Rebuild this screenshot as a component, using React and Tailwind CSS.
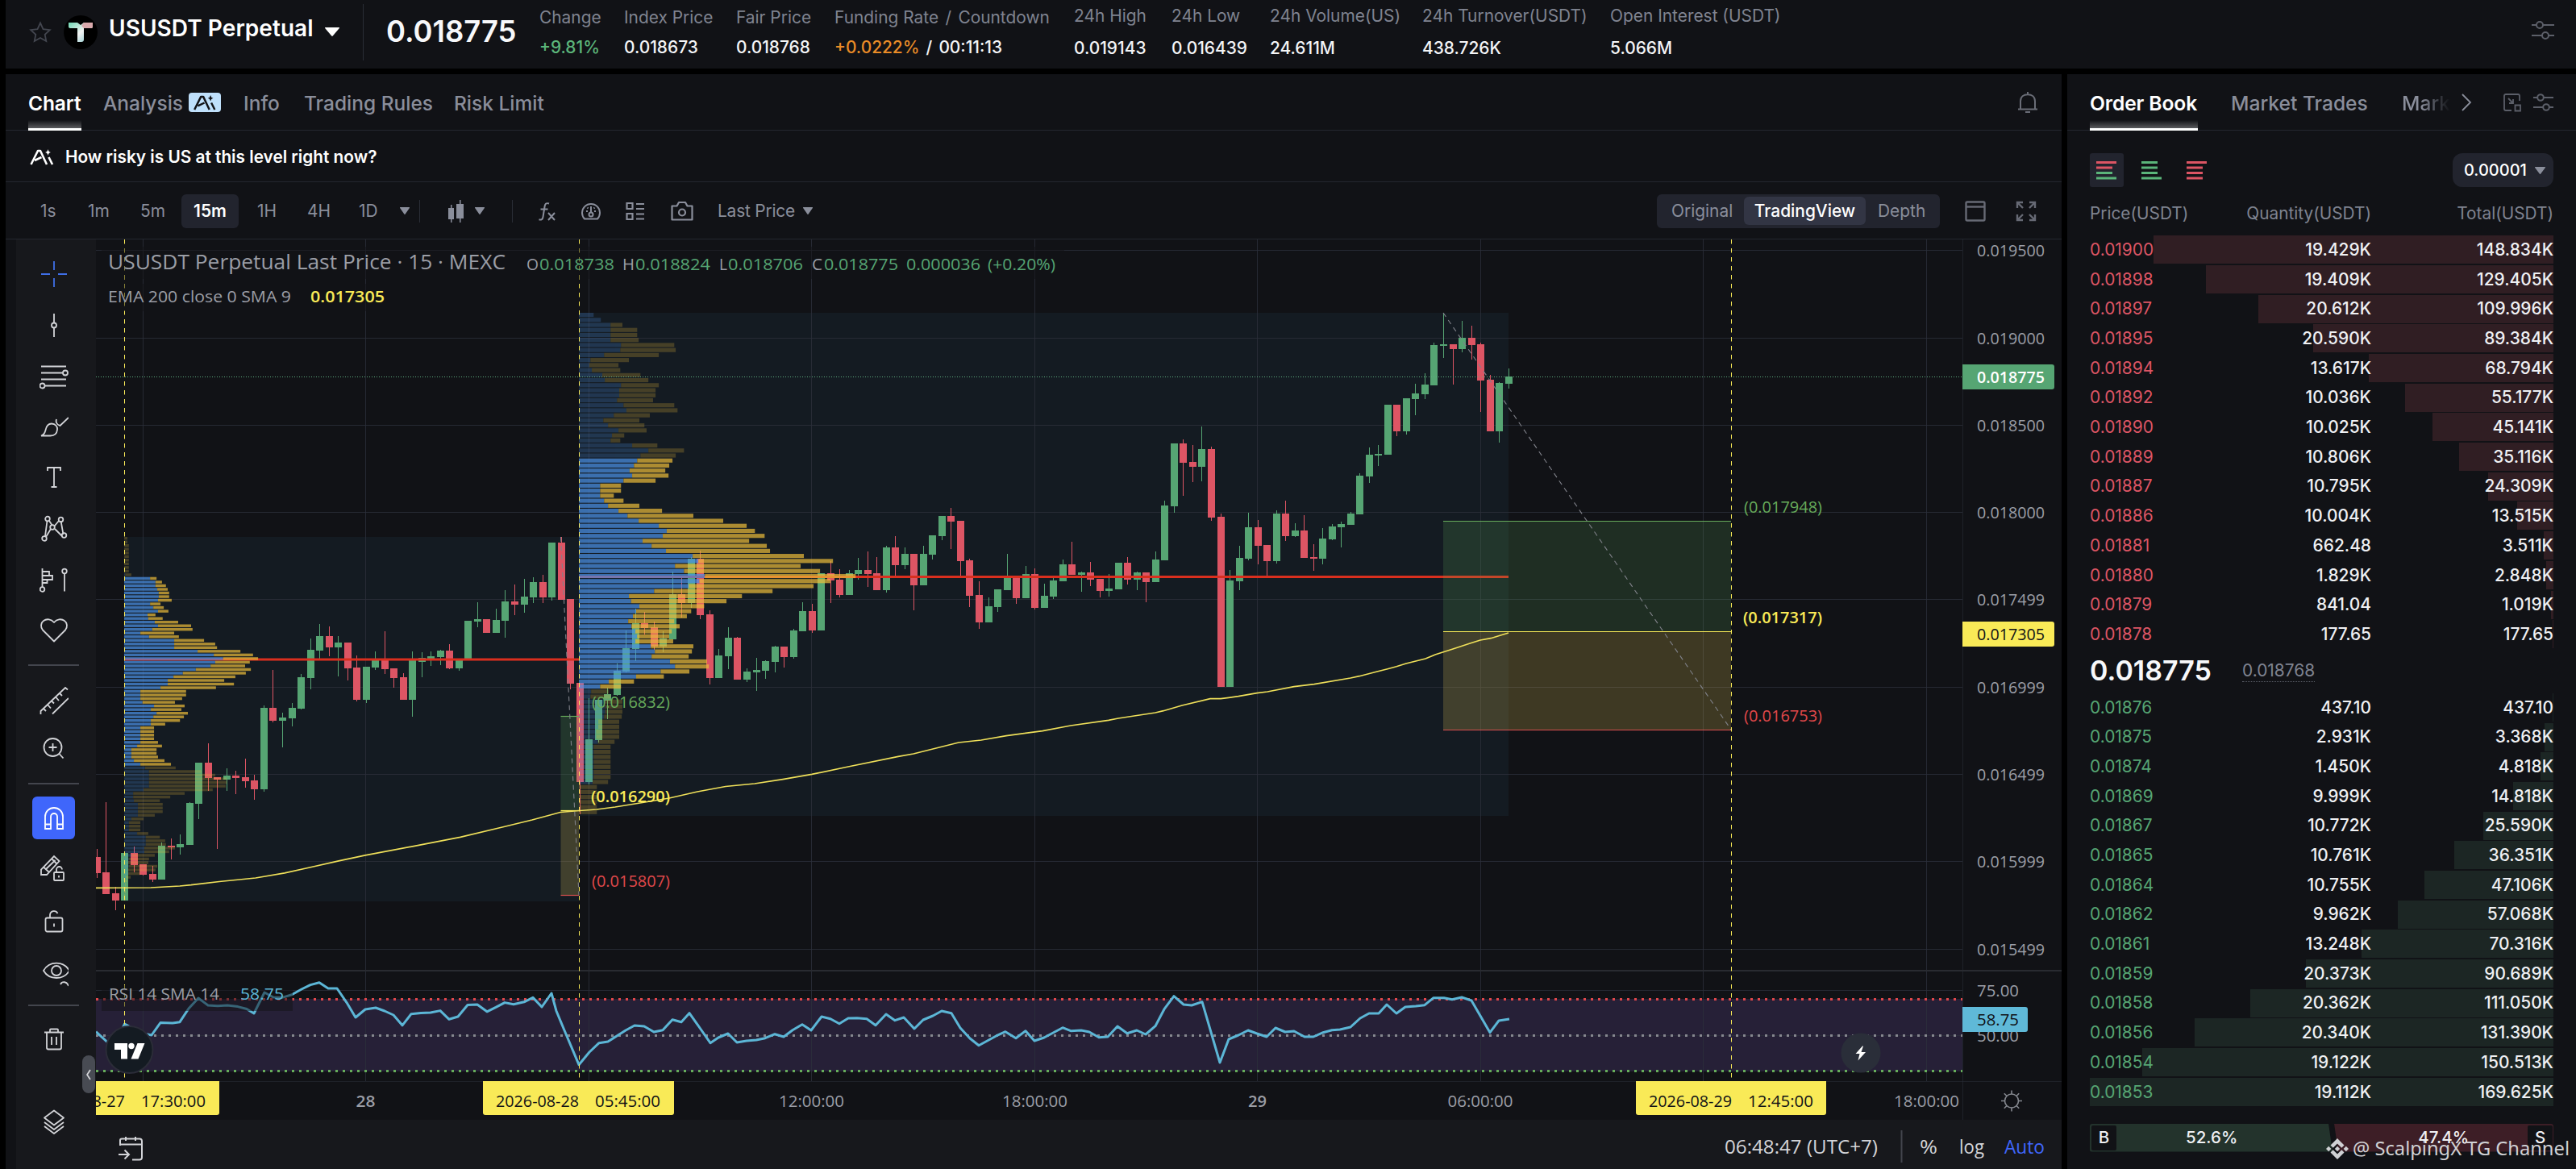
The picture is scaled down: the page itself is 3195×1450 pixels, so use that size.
import { clsx } from 'clsx';

/* ------------------------------------------------------------------ */
/* Data                                                               */
/* ------------------------------------------------------------------ */

const STATS = [
  { label: 'Change', value: '+9.81%', width: 'w-[105px]', color: 'text-[#5bb57a]' },
  { label: 'Index Price', value: '0.018673', width: 'w-[139px]' },
  { label: 'Fair Price', value: '0.018768', width: 'w-[122px]' },
];

const STATS_24H = [
  { label: '24h High', value: '0.019143', width: 'w-[121px]' },
  { label: '24h Low', value: '0.016439', width: 'w-[122px]' },
  { label: '24h Volume(US)', value: '24.611M', width: 'w-[189px]' },
  { label: '24h Turnover(USDT)', value: '438.726K', width: 'w-[233px]' },
  { label: 'Open Interest (USDT)', value: '5.066M', width: 'w-[240px]' },
];

const ASKS = [
  ['0.01900', '19.429K', '148.834K'],
  ['0.01898', '19.409K', '129.405K'],
  ['0.01897', '20.612K', '109.996K'],
  ['0.01895', '20.590K', '89.384K'],
  ['0.01894', '13.617K', '68.794K'],
  ['0.01892', '10.036K', '55.177K'],
  ['0.01890', '10.025K', '45.141K'],
  ['0.01889', '10.806K', '35.116K'],
  ['0.01887', '10.795K', '24.309K'],
  ['0.01886', '10.004K', '13.515K'],
  ['0.01881', '662.48', '3.511K'],
  ['0.01880', '1.829K', '2.848K'],
  ['0.01879', '841.04', '1.019K'],
  ['0.01878', '177.65', '177.65'],
];

const BIDS = [
  ['0.01876', '437.10', '437.10'],
  ['0.01875', '2.931K', '3.368K'],
  ['0.01874', '1.450K', '4.818K'],
  ['0.01869', '9.999K', '14.818K'],
  ['0.01867', '10.772K', '25.590K'],
  ['0.01865', '10.761K', '36.351K'],
  ['0.01864', '10.755K', '47.106K'],
  ['0.01862', '9.962K', '57.068K'],
  ['0.01861', '13.248K', '70.316K'],
  ['0.01859', '20.373K', '90.689K'],
  ['0.01858', '20.362K', '111.050K'],
  ['0.01856', '20.340K', '131.390K'],
  ['0.01854', '19.122K', '150.513K'],
  ['0.01853', '19.112K', '169.625K'],
];

// direction, high, body top, body bottom, low
const CANDLES = `r1053,1063,1083,1089 r995,1082,1109,1109 r1100,1108,1117,1129 g1058,1058,1117,1117 r1050,1058,1073,1082
r1072,1072,1085,1086 r1074,1084,1091,1094 g1045,1049,1091,1091 r1040,1049,1051,1066 g1035,1047,1051,1060
g995,996,1048,1048 g946,946,997,1016 r922,946,965,981 r964,964,967,1053 g953,962,967,981
r956,962,965,985 r941,964,969,977 r961,968,979,992 g875,878,979,982 r831,878,894,896
g884,890,894,927 g872,878,891,901 g836,840,879,880 g792,806,841,855 g774,789,807,817
r777,789,803,814 g789,797,803,839 r797,797,829,844 r813,828,868,870 g827,827,868,872
g808,819,828,831 r783,819,830,836 r829,829,841,853 r835,840,868,868 g808,819,868,889
g809,816,821,840 g808,814,817,826 g806,807,815,825 r799,807,829,830 g819,819,829,832
g770,770,817,817 g747,768,771,778 r768,768,785,785 g755,769,785,785 g732,746,770,791
r725,746,750,763 g718,740,750,760 g716,722,741,748 r713,722,741,748 g673,673,741,745
r666,673,744,744 r743,743,848,855 r847,847,970,1010 g866,917,970,973 g868,868,918,921
g853,861,869,892 g823,832,862,863 g782,804,833,834 g755,773,805,820 r759,773,779,787
r771,778,802,806 g783,792,802,809 g709,737,793,793 r717,737,748,766 g691,693,748,754
r683,693,763,768 r757,762,841,849 g805,813,841,841 g778,791,814,830 r790,791,843,843
g829,833,843,846 g816,831,834,857 g819,820,832,842 g801,802,821,834 r802,802,815,828
g780,782,815,817 g747,758,783,783 r749,758,782,785 g711,711,782,782 r696,711,720,748
r706,719,738,741 g707,711,738,738 g692,707,712,719 r684,707,712,728 r691,711,732,732
g677,679,732,735 r665,679,701,714 g679,687,701,706 r687,687,726,757 g677,687,726,726
g664,664,688,694 g640,640,665,670 r630,640,647,681 r646,646,696,714 r693,695,739,753
r721,738,772,780 g741,752,772,772 g731,731,753,759 g687,715,732,732 r715,715,742,749
g702,712,742,742 r705,712,754,756 g724,739,754,754 g716,720,740,743 g694,700,721,721
r672,700,713,713 g709,710,713,734 r697,710,719,727 r718,718,733,741 g712,730,733,740
g698,698,731,731 r691,698,719,725 g709,710,719,732 r710,710,722,747 g684,694,722,722
g621,627,695,695 g550,550,628,636 r545,550,574,615 r552,573,579,598 g529,557,579,597
r554,557,642,646 r637,641,852,852 g707,720,852,852 g677,692,721,732 g636,654,693,695
r645,654,677,700 r676,676,696,715 g633,637,696,699 r621,637,665,671 g649,658,665,666
r639,658,692,692 r675,691,693,708 g655,668,693,700 g650,653,669,670 g647,650,654,679
g635,637,651,651 g587,590,638,638 g555,564,591,599 g552,563,565,578 g502,502,564,564
r502,502,535,541 g494,494,535,539 g476,488,495,515 g463,477,489,495 g425,428,478,478
g388,427,429,444 r427,427,433,477 g398,419,433,437 r404,419,428,446 r425,427,472,511
r465,471,535,535 g474,475,535,549 g457,467,476,482`
  .split(/\s+/)
  .map((c) => ({ up: c[0] === 'g', v: c.slice(1).split(',').map(Number) }));

// [buy volume, total volume] for each of the 100 rows of a session
const PROFILE_A = [
  [0, 9], [0, 9], [0, 13], [0, 13], [0, 13], [0, 13], [0, 13], [0, 13], [0, 13], [0, 13],
  [3, 20], [72, 90], [87, 105], [87, 116], [92, 121], [96, 125], [96, 125], [94, 132], [72, 101], [81, 110],
  [94, 123], [65, 87], [67, 107], [85, 150], [94, 186], [78, 190], [45, 139], [69, 152], [139, 222], [139, 253],
  [139, 258], [204, 323], [249, 358], [275, 372], [253, 349], [240, 336], [199, 352], [163, 338], [137, 309], [121, 278],
  [121, 305], [101, 255], [45, 172], [45, 172], [45, 161], [51, 141], [83, 168], [74, 159], [90, 177], [81, 166],
  [74, 155], [74, 114], [45, 83], [45, 83], [45, 83], [45, 83], [45, 94], [36, 105], [20, 90], [20, 90],
  [20, 94], [27, 112], [45, 130], [58, 143], [69, 215], [69, 253], [69, 285], [69, 285], [69, 282], [54, 246],
  [25, 168], [25, 128], [27, 99], [38, 107], [38, 107], [38, 107], [38, 85], [20, 54], [13, 45], [13, 45],
  [13, 45], [36, 67], [60, 99], [60, 114], [60, 116], [56, 141], [56, 125], [20, 85], [13, 69], [11, 67],
  [13, 92], [11, 87], [11, 45], [5, 18], [2, 9], [2, 5], [0, 5], [0, 5], [0, 3], [0, 3],
];

const PROFILE_B = [
  [41, 41], [61, 61], [88, 121], [88, 162], [88, 162], [88, 166], [117, 265], [115, 269], [70, 222], [32, 139],
  [29, 110], [36, 115], [65, 171], [72, 193], [117, 222], [112, 213], [112, 213], [106, 206], [124, 265], [132, 274],
  [97, 197], [68, 168], [81, 182], [110, 188], [92, 126], [88, 115], [148, 218], [193, 292], [171, 269], [162, 260],
  [153, 251], [141, 240], [148, 249], [124, 213], [59, 117], [59, 117], [59, 97], [70, 124], [81, 168], [110, 231],
  [135, 318], [166, 401], [222, 466], [244, 489], [233, 516], [177, 473], [202, 522], [242, 531], [316, 625], [332, 706],
  [267, 616], [292, 670], [350, 769], [335, 699], [305, 652], [209, 538], [139, 453], [145, 410], [168, 348], [159, 312],
  [150, 300], [137, 265], [146, 280], [157, 258], [162, 251], [157, 262], [200, 318], [211, 314], [202, 305], [253, 356],
  [267, 361], [227, 307], [159, 236], [83, 153], [59, 117], [34, 83], [32, 88], [74, 121], [73, 121], [73, 121],
  [70, 119], [54, 112], [54, 112], [48, 112], [48, 112], [53, 99], [41, 88], [41, 88], [41, 88], [41, 88],
  [41, 88], [41, 88], [41, 88], [38, 81], [0, 50], [0, 50], [0, 50], [0, 50], [0, 50], [0, 50],
];

const EMA =
  '119,1101.4 187,1101 223,1099 237,1097.7 272,1093.5 317,1089 353,1082.8 384,1076 420,1067.8 453,1060.8 513,1049.6 571,1038.4 625,1025.5 660,1017 695,1007.5 718,1005.5 740,1004 763,1001 800,995 830,990 865,982 900,975.5 936,972 971,966.6 1007,960.4 1052,951 1114,938.4 1133,935 1189,921 1217,918 1248,912.7 1293,906.6 1328,900 1375,893.3 1387,891 1433,884 1443,881.7 1466,875 1501,866.7 1514,866.7 1536,863.7 1559,859.7 1572,858 1605,851.7 1630,848.7 1675,841 1686,838.7 1708,833 1721,829.7 1732,826.7 1744,823 1768,817 1780,812 1802,805 1824,797.7 1836,794 1849,791.7 1871,785';

const RSI =
  '119,1279.7 133,1292.5 143,1296 154.5,1270 163,1274.7 178,1282 188,1284 199,1268.5 214,1269 223,1267.7 234,1251 246,1238 258,1247 270,1247.8 282,1247 295,1248.6 306,1251.5 315,1257 328,1231 339,1237 350,1237.4 362,1233.7 374,1227 385,1221.6 396,1218.7 407,1226 418,1226 430,1243.6 441,1262 453,1252 466,1250 477,1254 488,1259 499,1271.8 510,1257.7 522,1256.5 534,1256 546,1253.6 557,1264.3 568,1261 580,1246.5 592,1246 604,1254.8 615,1249.4 626,1243.6 637,1245.7 650,1242.8 661,1237.4 672,1249 684,1232 690,1254 700,1278 718,1320.7 731,1305 743,1293.7 754,1292 765,1285 776,1278 787,1272 799,1273 811,1280 822,1277.7 834,1264.7 845,1267.7 855,1256.7 868,1275 881,1293.7 891,1287 903,1282 914,1293 926,1291 938,1290 949,1287.7 961,1282.7 972,1286 983,1277.7 995,1270.7 1006,1278 1019,1261 1030,1263.7 1041,1269.7 1052,1263 1063,1262.7 1075,1263.7 1086,1271.7 1099,1258 1110,1265.7 1121,1262 1134,1276 1145,1265 1157,1260 1168,1254 1180,1256.7 1191,1275 1203,1288 1214,1296.7 1236,1284.7 1247,1279.7 1260,1287.7 1272,1278.7 1283,1291 1295,1287 1318,1274.7 1328,1278.7 1341,1278 1351,1280 1363,1286.7 1374,1286 1386,1273 1398,1281.7 1410,1278 1421,1283 1433,1272.7 1444,1251.7 1456,1235.7 1468,1246 1478,1247 1491,1242.7 1513,1318 1524,1289 1536,1284 1548,1278 1559,1282 1571,1286 1582,1275 1594,1280 1605,1279 1618,1286 1629,1286 1641,1280.7 1652,1277.7 1662,1277 1675,1274 1687,1263 1698,1257 1710,1257 1720,1246 1732,1257 1743,1249 1756,1248 1767,1246.7 1778,1237.7 1791,1237.7 1801,1239.7 1813,1237 1825,1241 1848,1280.7 1859,1266 1872,1264';

const GRID_X = [177, 453.5, 730, 1006.5, 1283.5, 1559.5, 1836.5, 2112.5, 2389.5];

const PRICE_AXIS = [
  ['0.019500', 310.5],
  ['0.019000', 419.5],
  ['0.018500', 527.5],
  ['0.018000', 635.5],
  ['0.017499', 743.5],
  ['0.016999', 852.5],
  ['0.016499', 960.5],
  ['0.015999', 1068.5],
  ['0.015499', 1177.5],
];

const TIME_AXIS = [
  ['28', 453.5, 24, 600],
  ['12:00:00', 1006.5, 81, 400],
  ['18:00:00', 1283.5, 81, 400],
  ['29', 1559.5, 23, 600],
  ['06:00:00', 1836, 81, 400],
  ['18:00:00', 2389.5, 81, 400],
];

/* ------------------------------------------------------------------ */
/* Small shared pieces                                                */
/* ------------------------------------------------------------------ */

const Caret = ({ className }) => (
  <svg viewBox="0 0 12 10" preserveAspectRatio="none" className={className} fill="currentColor">
    <path d="M.6 0h10.8a.6.6 0 0 1 .5 1L6.5 9.6a.6.6 0 0 1-1 0L.1 1A.6.6 0 0 1 .6 0z" />
  </svg>
);

const Icon = ({ size = 28, className, children, sw = 1.6 }) => (
  <svg
    width={size}
    height={size}
    viewBox={`0 0 ${size} ${size}`}
    fill="none"
    stroke="currentColor"
    strokeWidth={sw}
    className={clsx('shrink-0', className)}
  >
    {children}
  </svg>
);

const AiMark = ({ className, width, height }) => (
  <svg
    width={width}
    height={height}
    viewBox="0 0 30 20"
    fill="none"
    stroke="currentColor"
    strokeWidth="2.6"
    className={className}
  >
    <path d="M1.5 19 L10 2 H13 L21 19 M6 14 L14.5 10" strokeLinejoin="round" />
    <path d="M23.5 10 L28 19" />
    <path d="M22.5 0 Q23 3.3 26 4 Q23 4.7 22.5 8 Q22 4.7 19 4 Q22 3.3 22.5 0z" fill="currentColor" stroke="none" />
  </svg>
);

const Sliders = ({ className }) => (
  <Icon size={28} sw={2} className={className}>
    <path d="M0 8h6M14 8h14M0 21h13M21 21h7" />
    <circle cx="10" cy="8" r="4" />
    <circle cx="17" cy="21" r="4" />
  </Icon>
);

const Stat = ({ label, value, width, color, className, gap = 'mt-[17px]' }) => (
  <div className={clsx('shrink-0', width, className)}>
    <div className="text-[20.9px] leading-5 whitespace-nowrap text-[#7f8390]">{label}</div>
    <div className={clsx('text-[20.9px] leading-5 font-medium whitespace-nowrap', gap, color || 'text-[#f4f5f7]')}>
      {value}
    </div>
  </div>
);

/* ------------------------------------------------------------------ */
/* Header                                                             */
/* ------------------------------------------------------------------ */

const Header = () => (
  <header className="flex h-[85px] shrink-0 bg-[#111216]">
    <Icon size={28} sw={1.8} className="mt-[26px] ml-[29px] text-[#43464f]">
      <path d="M14 2.5l3.5 7.6 8.3 1-6.1 5.7 1.6 8.2L14 21l-7.3 4 1.6-8.2-6.1-5.7 8.3-1z" />
    </Icon>
    <svg width="42" height="42" viewBox="0 0 42 42" className="mt-[19px] ml-[15px] shrink-0">
      <defs>
        <linearGradient id="coin" x1="0" y1="0" x2="1" y2="1">
          <stop offset="0" stopColor="#6fd8b4" />
          <stop offset=".5" stopColor="#f3f3f3" />
          <stop offset="1" stopColor="#7cc4c8" />
        </linearGradient>
      </defs>
      <circle cx="21" cy="21" r="21" fill="#000" />
      <path d="M6 9h11l4 3 4-3h11v5q0 2-2 2h-9v14q0 3-3 3h-5V16H8q-2 0-2-2z" fill="url(#coin)" />
      <path d="M25 9h11v5q0 2-2 2h-9l-3-3z" fill="#d9a9ac" />
    </svg>
    <div className="mt-[19px] ml-[14px] w-[252px] text-[28px] leading-8 font-semibold tracking-[0.05px] whitespace-nowrap text-white">
      USUSDT Perpetual
    </div>
    <Caret className="mt-[34px] ml-[16px] h-[11px] w-[18px] shrink-0 text-white" />
    <div className="mt-[5px] ml-[29px] h-[70px] w-px shrink-0 bg-[#2a2d36]" />
    <div className="mt-[19px] ml-[28px] w-[190px] shrink-0 text-[36.4px] leading-[40px] font-semibold text-[#f7f8fa]">
      0.018775
    </div>
    <div className="flex pt-[12px]">
      {STATS.map((s) => (
        <Stat key={s.label} {...s} />
      ))}
      <div className="w-[297px] shrink-0">
        <div className="text-[20.9px] leading-5 whitespace-nowrap text-[#7f8390]">
          Funding Rate <span className="px-[2.5px]">/</span> Countdown
        </div>
        <div className="mt-[17px] text-[20.9px] leading-5 font-medium whitespace-nowrap text-[#f4f5f7]">
          <span className="text-[#e98b27]">+0.0222%</span> <span className="px-[2.5px]">/</span> 00:11:13
        </div>
      </div>
    </div>
    <div className="flex pt-[10px]">
      {STATS_24H.map((s) => (
        <Stat key={s.label} {...s} gap="mt-[20px]" />
      ))}
    </div>
    <Sliders className="mt-[23px] mr-[27px] ml-auto text-[#5c5f69]" />
  </header>
);

/* ------------------------------------------------------------------ */
/* Chart panel bars                                                   */
/* ------------------------------------------------------------------ */

const ActiveTab = ({ children, className }) => (
  <div
    className={clsx(
      'relative flex h-[70px] shrink-0 items-center pt-[2px] font-semibold tracking-[-0.1px] text-white',
      className,
    )}
  >
    {children}
    <span className="absolute inset-x-0 bottom-0 h-[13px] bg-linear-to-b from-transparent to-white/40" />
    <span className="absolute inset-x-0 bottom-0 h-[3px] bg-white" />
  </div>
);

const ChartTabs = () => (
  <div className="relative flex h-[70px] shrink-0 items-center pl-[28px] text-[24.5px] whitespace-nowrap text-[#8a8e9b] shadow-[inset_0_-1px_0_#24272f]">
    <ActiveTab className="w-[66px]">Chart</ActiveTab>
    <span className="ml-[27px] w-[106px] pt-[2px] font-medium">Analysis</span>
    <span className="flex h-6 w-10 items-center justify-center rounded-[4px] bg-[#bfe0fb] text-[#111216]">
      <AiMark width={30} height={19} />
    </span>
    <span className="ml-[28px] w-[75px] pt-[2px] font-medium">Info</span>
    <span className="w-[186px] pt-[2px] font-medium">Trading Rules</span>
    <span className="pt-[2px] font-medium">Risk Limit</span>
    <Icon size={26} sw={2} className="mr-[29px] ml-auto text-[#6a6d77]">
      <path d="M1 21.5h24M4 21V11.5C4 6 8 3.200 13 3.200S22 6 22 11.500V21M13 0v3M10 25h6" />
    </Icon>
  </div>
);

const AiRow = () => (
  <div className="flex h-16 shrink-0 items-center pt-[2px] pl-[30px] shadow-[inset_0_-1px_0_#24272f]">
    <AiMark width={30} height={20} className="text-white" />
    <span className="ml-[14px] text-[20.8px] font-semibold text-white">How risky is US at this level right now?</span>
  </div>
);

const Divider = ({ className }) => <span className={clsx('h-7 w-px bg-[#2a2d36]', className)} />;

const Toolbar = () => (
  <div className="flex h-[71px] shrink-0 items-center text-[20.9px] whitespace-nowrap text-[#8a8e9b] shadow-[inset_0_-1px_0_#24272f]">
    <span className="ml-[43px] w-[59px]">1s</span>
    <span className="w-[65px]">1m</span>
    <span className="w-[51px]">5m</span>
    <span className="flex h-[42px] w-[71px] items-center justify-center rounded-md bg-[#22242e] font-semibold text-white">
      15m
    </span>
    <span className="ml-[23px] w-[62px]">1H</span>
    <span className="w-[64px]">4H</span>
    <span className="w-[51px]">1D</span>
    <Caret className="h-[9px] w-3" />
    <Divider className="ml-[12px]" />
    <svg width="20" height="28" className="ml-[35px]" fill="currentColor">
      <path d="M0 10h7v14H0zM3 6h1.500v22H3zM10 5h9v18h-9zM14 0h1.500v28H14z" />
    </svg>
    <Caret className="ml-[13px] h-[9px] w-3" />
    <Divider className="ml-[34px]" />
    {/* indicators */}
    <Icon size={24} sw={2} className="ml-[31px]">
      <path d="M14 2.500c-4-1.200-5 .5-5.500 4L6.500 19c-.5 3.200-2 4-5 3.300M3.500 9.500h9M13 14l8 9M21 14l-8 9" />
    </Icon>
    <Icon size={26} sw={2} className="ml-[29px]">
      <path d="M5 22.500A11 11 0 1 1 21 22.500z" />
      <path d="M13 7v8M7 13h2M17 13h2M8.500 8.500l1 1M17.500 8.500l-1 1" />
      <circle cx="13" cy="17" r="2.500" />
    </Icon>
    <Icon size={24} sw={2.2} className="ml-[30px]">
      <path d="M1.500 2h7v7h-7zM1.500 15h7v7h-7zM13 3h10M13 9h10M13 15.500h10M13 21.500h10" />
    </Icon>
    <Icon size={28} sw={2.2} className="ml-[32px]">
      <path d="M1.500 7.500h6L10 3h8l2.500 4.500h6v17h-25z" strokeLinejoin="round" />
      <circle cx="14" cy="15.500" r="4" />
    </Icon>
    <span className="ml-[30px] w-[106px] tracking-[-0.2px]">Last Price</span>
    <Caret className="h-[9px] w-3" />

    <div className="mr-[31px] ml-auto flex h-[42px] w-[351px] items-center rounded-md bg-[#22242e]">
      <span className="ml-[18px] w-[90px]">Original</span>
      <span className="flex h-[35px] w-[151px] items-center justify-center rounded-md bg-[#323544] font-medium text-white">
        TradingView
      </span>
      <span className="ml-[15px]">Depth</span>
    </div>
    <Icon size={26} sw={2.4} className="text-[#666974]">
      <rect x="1.500" y="1.500" width="23" height="23" rx="1.500" />
      <path d="M2 7.500h22" />
    </Icon>
    <Icon size={26} sw={2.4} className="mr-[31px] ml-[37px] text-[#666974]">
      <path d="M2 9V2h7M2 2l7 7M17 2h7v7M24 2l-7 7M2 17v7h7M2 24l7-7M24 17v7h-7M24 24l-7-7" />
    </Icon>
  </div>
);

/* ------------------------------------------------------------------ */
/* Drawing tools                                                      */
/* ------------------------------------------------------------------ */

const Tool = ({ h = 'h-[63px]', children, size = 36 }) => (
  <div className={clsx('flex w-full shrink-0 items-center justify-center', h)}>
    <Icon size={size} sw={1.8}>
      {children}
    </Icon>
  </div>
);

const ToolSeparator = ({ h }) => (
  <div className={clsx('flex w-full shrink-0 items-center justify-center', h)}>
    <span className="h-[2px] w-[63px] bg-[#43454d]" />
  </div>
);

const DrawingTools = () => (
  <div className="relative flex w-[99px] shrink-0 flex-col items-center bg-[#17181c] pt-[11px] pr-[6px] text-[#d3d4d8]">
    <div className="flex h-[63px] w-full items-center justify-center text-[#3f6fe8]">
      <Icon size={36} sw={1.800}>
        <path d="M18 2v11M18 23v11M2 18h11M23 18h11" />
      </Icon>
    </div>
    <Tool>
      <path d="M18 4v11.500M18 21.500V33" />
      <circle cx="18" cy="18.500" r="3" />
    </Tool>
    <Tool>
      <path d="M2 6.500h31M2 14.500h27M2 22.500h31M6 30.500h27" />
      <circle cx="32" cy="14.500" r="3" />
      <circle cx="3.500" cy="30.500" r="3" />
    </Tool>
    <Tool>
      <path d="M2 29.500c3-1 4.500-3 5.500-7 1-5 3.500-8 7.500-8 4.500 0 7.500 3.500 7 7.500-.5 5-4 7.500-8.500 7.500zM21 9c-1 3 0 7 4.500 8L36 7" />
    </Tool>
    <Tool>
      <path d="M10 10V6h16v4M18 6v24M14.500 30h7" />
    </Tool>
    <Tool>
      <path d="M7 28L9.500 9M12 9l4 6M18.500 15.500L24 9M26.500 9l3 17M8 29l6-10M19 19l9 9" />
      <circle cx="10" cy="6.500" r="2.800" />
      <circle cx="26.500" cy="7.500" r="2.800" />
      <circle cx="16" cy="17" r="2.800" />
      <circle cx="6" cy="31" r="2.800" />
      <circle cx="30.500" cy="27" r="2.800" />
    </Tool>
    <Tool>
      <path d="M3.500 5v23M3.500 9h8.500v5H3.500M3.500 14h12.500v5H3.500M3.500 19h6v4h-6M31 11.500v22" />
      <circle cx="3.500" cy="31" r="2.800" />
      <circle cx="31" cy="8.500" r="2.800" />
    </Tool>
    <Tool>
      <path d="M18 32.500L4 18.500c-3-3.500-2.500-9 1-11.500 4-3 9.500-2 13 2 3.500-4 9-5 13-2 3.500 2.500 4 8 1 11.500z" strokeLinejoin="round" />
    </Tool>
    <ToolSeparator h="h-[25px]" />
    <Tool>
      <path d="M1.500 35v-4L32 2l3 2.500M16 34.500L36 15M5 28l3 3M10 23l4 4.500M15 18.500l3 3M20 13.500l4 4.500M25 9l3 3" />
    </Tool>
    <Tool h="h-[56px]">
      <circle cx="16.500" cy="17" r="11" />
      <path d="M16.500 12v10M11.500 17h10M24.500 25l5 5.500" />
    </Tool>
    <ToolSeparator h="h-[32px]" />
    <div className="flex h-[53px] w-[53px] shrink-0 items-center justify-center rounded-md bg-[#3f66fb] text-white">
      <Icon size={28} sw={1.800}>
        <path d="M3 27V12a11 11 0 0 1 22 0v15h-7V12a4 4 0 0 0-8 0v15zM3 21.500h7M18 21.500h7" />
      </Icon>
    </div>
    <Tool h="h-[70px]">
      <path d="M2 27v-6.500L18 4l6.500 6L9 27zM5 17.500l7 6.500M15 7l6.500 6.500M8 20L19.500 9" />
      <rect x="18" y="24" width="12" height="10" rx="1" />
      <path d="M21 24v-3.500a3.500 3.500 0 0 1 7 0M24 28v2.500" />
    </Tool>
    <Tool h="h-[61px]">
      <rect x="7.500" y="14.500" width="21" height="17" rx="2" />
      <path d="M13 14.500v-4a5 5 0 0 1 9.500-1.500M18 21.500v4" />
    </Tool>
    <Tool h="h-[68px]">
      <path d="M5 16C12 3.500 30 3.500 37 16 30 28 12 28 5 16z" />
      <circle cx="21" cy="16" r="6" />
      <path d="M26 33c2-4 8-4 10 2" />
    </Tool>
    <ToolSeparator h="h-[14px]" />
    <Tool h="h-[70px]">
      <path d="M6 9.500h24M13 9.500V6.500q0-1 1-1h8q1 0 1 1v3M9 9.500v19q0 2 2 2h14q2 0 2-2v-19M15 15v10M21 15v10" />
    </Tool>
    <div className="h-[37px]" />
    <Tool h="h-[60px]">
      <path d="M18 4.500l12 9-12 9-12-9zM6 19l12 9 12-9M6 24l12 9 12-9" strokeLinejoin="round" />
    </Tool>
    {/* collapse handle */}
    <div className="absolute top-[1012px] left-[82px] flex h-[47px] w-[16px] items-center justify-center rounded-lg bg-[#484b53] text-[#d3d4d8]">
      <svg width="6" height="14" fill="none" stroke="currentColor" strokeWidth="1.800">
        <path d="M5 1L1 7l4 6" />
      </svg>
    </div>
  </div>
);

/* ------------------------------------------------------------------ */
/* Chart                                                              */
/* ------------------------------------------------------------------ */

const T = ({ x, y, w, size = 20.5, fill = '#9b9ea6', weight = 400, anchor = 'start', children }) => (
  <text
    x={x}
    y={y}
    fontSize={size}
    fill={fill}
    fontWeight={weight}
    textAnchor={anchor}
    textLength={w}
    lengthAdjust="spacingAndGlyphs"
  >
    {children}
  </text>
);

const VolumeProfile = ({ rows, x, top, pitch, from, to }) => (
  <g>
    {rows.map(([buy, total], i) => {
      const active = i >= from && i <= to;
      const y = top + i * pitch;
      const h = pitch - 1.1;
      return (
        <g key={i} opacity={active ? 0.7 : 0.23}>
          <rect x={x} y={y} width={buy / 2.24} height={h} fill="#4c93ea" />
          <rect x={x + buy / 2.24} y={y} width={(total - buy) / 2.24} height={h} fill="#edbd3a" />
        </g>
      );
    })}
  </g>
);

const Candles = () => (
  <g shapeRendering="crispEdges">
    {CANDLES.map(({ up, v: [high, top, bottom, low] }, i) => {
      const x = Math.round(119.6 + i * 11.52);
      return (
        <g key={i} fill={up ? '#56a573' : '#dd5564'}>
          <rect x={x - 0.500} y={high} width="1" height={Math.max(low - high, 1)} />
          <rect x={x - 4.500} y={top} width="9" height={Math.max(bottom - top, 2)} />
        </g>
      );
    })}
  </g>
);

const Zone = ({ x1, x2, top, mid, bottom }) => (
  <g>
    <rect x={x1} y={top} width={x2 - x1} height={mid - top} fill="#66b05e" fillOpacity=".18" />
    <rect x={x1} y={mid} width={x2 - x1} height={bottom - mid} fill="#f3d85a" fillOpacity=".2" />
    <path d={`M${x1} ${top}H${x2}`} stroke="#67ab5b" strokeWidth="1.200" />
    <path d={`M${x1} ${mid}H${x2}`} stroke="#f9ea57" strokeWidth="1.200" />
    <path d={`M${x1} ${bottom}H${x2}`} stroke="#d8504f" strokeWidth="1.200" />
  </g>
);

const Chart = () => (
  <svg
    width="2438"
    height="1092"
    viewBox="119 297 2438 1092"
    className="block shrink-0 bg-[#111216] font-['Open_Sans','Noto_Sans',sans-serif]"
  >
    {/* session backgrounds */}
    <rect x="154" y="666" width="564" height="452" fill="#141b22" />
    <rect x="718" y="388" width="1153" height="624" fill="#141b22" />
    <rect x="119" y="1239" width="2315" height="90" fill="#262037" />

    {/* grid */}
    <g stroke="#2c303b" strokeOpacity=".8" strokeWidth="1">
      {GRID_X.map((x) => (
        <path key={x} d={`M${Math.floor(x) + 0.5} 297V1341`} />
      ))}
      {PRICE_AXIS.map(([label, y]) => (
        <path key={label} d={`M119 ${y}H2434`} />
      ))}
      <path d="M119 1228.500H2434M119 1284.500H2434" />
      <path d="M2434.500 297V1389M119 1341.500H2557" strokeOpacity=".5" />
    </g>
    <path d="M119 1204H2557" stroke="#292b31" strokeWidth="2" />

    <Candles />

    {/* points of control */}
    <path d="M154 818H718M718 715.500H1871" stroke="#da2f1e" strokeWidth="3" />

    <VolumeProfile rows={PROFILE_A} x={154} top={666} pitch={4.52} from={11} to={62} />
    <VolumeProfile rows={PROFILE_B} x={718} top={388} pitch={6.23} from={29} to={74} />

    <Zone x1={695.5} x2={718} top={888.5} mid={1005.5} bottom={1110.5} />
    <Zone x1={1790} x2={2147} top={646.5} mid={783.5} bottom={905.5} />
    <g stroke="#80828a" strokeWidth="1.100" strokeDasharray="6 5" fill="none">
      <path d="M695.500 666L718 1110M1790 388L2147 905" />
    </g>

    <polyline points={EMA} fill="none" stroke="#efe05a" strokeWidth="1.700" />

    {/* last price */}
    <path d="M119 467.500H2434" stroke="#5fae80" strokeWidth="1" strokeDasharray="1 2" />

    {/* RSI pane */}
    <g strokeWidth="3" strokeDasharray="3 6">
      <path d="M119 1239.500H2434" stroke="#e0484a" />
      <path d="M119 1284.500H2434" stroke="#86878f" />
      <path d="M119 1328.500H2434" stroke="#66ae5a" />
    </g>
    <polyline points={RSI} fill="none" stroke="#5cb6d6" strokeWidth="3" strokeLinejoin="round" />

    {/* vertical markers */}
    <path d="M154.500 297V1341M718.500 297V1341M2147.500 297V1341" stroke="#f9ea57" strokeWidth="1" strokeDasharray="5.500 5.500" />

    {/* legends */}
    <g fill="#111216" fillOpacity=".5">
      <rect x="126" y="306" width="1194" height="40" />
      <rect x="126" y="352" width="360" height="34" />
      <rect x="126" y="1222" width="237" height="32" />
    </g>
    <T x="134" y="334" w="493" size={25}>USUSDT Perpetual Last Price · 15 · MEXC</T>
    <T x="653" y="335" w="15">O</T>
    <T x="669" y="335" w="93" fill="#56a573">0.018738</T>
    <T x="772" y="335" w="15">H</T>
    <T x="788" y="335" w="93" fill="#56a573">0.018824</T>
    <T x="892" y="335" w="10">L</T>
    <T x="903" y="335" w="93" fill="#56a573">0.018706</T>
    <T x="1007" y="335" w="13">C</T>
    <T x="1022" y="335" w="92" fill="#56a573">0.018775</T>
    <T x="1124" y="335" w="92" fill="#56a573">0.000036</T>
    <T x="1225" y="335" w="84" fill="#56a573">(+0.20%)</T>
    <T x="134" y="375" w="227">EMA 200 close 0 SMA 9</T>
    <T x="385" y="375" w="92" fill="#f9ea57" weight={600}>0.017305</T>
    <T x="135" y="1240" w="137">RSI 14 SMA 14</T>
    <T x="298" y="1240" w="54" fill="#5cb6d6">58.75</T>

    {/* zone labels */}
    <T x="734" y="878" w="97" fill="#67ab5b">(0.016832)</T>
    <T x="733" y="995" w="98" fill="#f9ea57" weight={600}>(0.016290)</T>
    <T x="734" y="1100" w="97" fill="#e0484a">(0.015807)</T>
    <T x="2163" y="636" w="97" fill="#67ab5b">(0.017948)</T>
    <T x="2162" y="773" w="98" fill="#f9ea57" weight={600}>(0.017317)</T>
    <T x="2163" y="895" w="97" fill="#e0484a">(0.016753)</T>

    {/* price axis */}
    {PRICE_AXIS.map(([label, y]) => (
      <T key={label} x="2452" y={y + 7.500} w="84">{label}</T>
    ))}
    <T x="2452" y="1236" w="52">75.00</T>
    <T x="2452" y="1292" w="52">50.00</T>
    <path d="M2434 452h111q3 0 3 3v25q0 3-3 3h-111z" fill="#56a573" />
    <T x="2452" y="475" w="84" fill="#fff" weight={600}>0.018775</T>
    <path d="M2434 771h111q3 0 3 3v25q0 3-3 3h-111z" fill="#f9ea57" />
    <T x="2452" y="794" w="84" fill="#111216">0.017305</T>
    <path d="M2434 1249h78q3 0 3 3v25q0 3-3 3h-78z" fill="#5fb9d8" />
    <T x="2452" y="1272" w="52" fill="#111216">58.75</T>

    {/* time axis */}
    {TIME_AXIS.map(([label, x, w, weight]) => (
      <T key={x} x={x} y="1373" w={w} weight={weight} anchor="middle">{label}</T>
    ))}
    <path d="M119 1341h153v39q0 3-3 3H119z" fill="#f9ea57" />
    <path d="M599 1341h237v39q0 3-3 3H602q-3 0-3-3z" fill="#f9ea57" />
    <path d="M2029 1341h236v39q0 3-3 3h-230q-3 0-3-3z" fill="#f9ea57" />
    <T x="51" y="1373" w="104" fill="#111216">2026-08-27</T>
    <T x="175" y="1373" w="80" fill="#111216">17:30:00</T>
    <T x="615" y="1373" w="103" fill="#111216">2026-08-28</T>
    <T x="738" y="1373" w="81" fill="#111216">05:45:00</T>
    <T x="2045" y="1373" w="103" fill="#111216">2026-08-29</T>
    <T x="2168" y="1373" w="81" fill="#111216">12:45:00</T>

    {/* TradingView badge */}
    <circle cx="160.500" cy="1302" r="29" fill="#141b22" stroke="#2b2c38" strokeWidth="2" />
    <g fill="#fff">
      <path d="M142 1294h16v19.500h-8V1302h-8z" />
      <circle cx="163" cy="1297.500" r="3.700" />
      <path d="M170.500 1294h9l-8 19.500h-9z" />
    </g>

    {/* quick action */}
    <circle cx="2308" cy="1306" r="24.500" fill="#2a2e39" />
    <path d="M2310 1297.500l-8.500 9.500h5l-2 8.500 9.500-10.500h-5.500l2.500-7.500z" fill="#fff" />

    {/* axis settings */}
    <g stroke="#85888f" strokeWidth="1.600" fill="none">
      <circle cx="2495" cy="1365.500" r="8.500" />
      <path d="M2495 1352.500v4.500M2495 1374v4.500M2482 1365.500h4.500M2503.500 1365.500h4.500M2485.800 1356.300l3.200 3.200M2501 1371.500l3.200 3.200M2485.800 1374.700l3.200-3.200M2501 1359.500l3.200-3.200" />
    </g>
  </svg>
);

const ChartFooter = () => (
  <div className="flex h-[61px] shrink-0 items-center bg-[#17181c] font-['Open_Sans','Noto_Sans',sans-serif] text-[24px] text-[#d3d4d8]">
    <Icon size={32} sw={2} className="mt-[8px] ml-[27px]">
      <path d="M3 13V6.500q0-2 2-2h22q3 0 3 3v20q0 3-3 3H18M3 11.500h27M10 2v5M22 2v5M1 24h12M8.500 18.500L14 24l-5.500 5.500" />
    </Icon>
    <svg width="402" height="44" viewBox="0 0 402 44" className="mt-[8px] mr-[16px] ml-auto">
      <T x="0" y="29" w="190" size={24} fill="#d3d4d8">06:48:47 (UTC+7)</T>
      <path d="M219.500 0v40" stroke="#43454d" strokeWidth="2" />
      <T x="242" y="29" w="22" size={24} fill="#d3d4d8">%</T>
      <T x="291" y="29" w="31" size={24} fill="#d3d4d8">log</T>
      <T x="347" y="29" w="50" size={24} fill="#3f66fb">Auto</T>
    </svg>
  </div>
);

/* ------------------------------------------------------------------ */
/* Order book                                                         */
/* ------------------------------------------------------------------ */

const toNumber = (total) => (total.endsWith('K') ? parseFloat(total) : parseFloat(total) / 1000);

const BookRows = ({ rows, max, ask }) => (
  <div className="flex shrink-0 flex-col">
    {rows.map(([price, qty, total]) => (
      <div
        key={price}
        className="relative flex h-[36.7px] items-center text-[20.9px] font-medium whitespace-nowrap text-[#eff0f3]"
      >
        <span
          className={clsx('absolute top-px right-0 h-[35px]', ask ? 'bg-[#301e23]' : 'bg-[#1c2624]')}
          style={{ width: `${(toNumber(total) / max) * 100}%` }}
        />
        <span className={clsx('relative w-[140px] font-normal', ask ? 'text-[#dd5564]' : 'text-[#56a573]')}>
          {price}
        </span>
        <span className="relative w-[209px] text-right">{qty}</span>
        <span className="relative flex-1 text-right">{total}</span>
      </div>
    ))}
  </div>
);

const BookModeIcon = ({ bars }) => (
  <svg width="26" height="23">
    {bars.map(([w, color], i) => (
      <rect key={i} x="0" y={i * 6.500} width={w} height="3" fill={color} />
    ))}
  </svg>
);

const RED = '#dd5564';
const GREEN = '#5bb57a';

const OrderBook = () => (
  <aside className="relative flex w-[631px] shrink-0 flex-col bg-[#111216]">
    <div className="flex h-[70px] shrink-0 items-center pl-[28px] text-[24.6px] font-medium whitespace-nowrap text-[#8a8e9b] shadow-[inset_0_-1px_0_#24272f]">
      <ActiveTab className="w-[134px]">Order Book</ActiveTab>
      <span className="ml-[41px] w-[212px] shrink-0 pt-[2px]">Market Trades</span>
      <span className="w-[60px] shrink-0 overflow-hidden bg-linear-to-r from-[#8a8e9b] from-40% to-[#111216] bg-clip-text pt-[2px] text-transparent">
        Mark
      </span>
      <svg width="14" height="22" fill="none" stroke="#8a8e9b" strokeWidth="1.800" className="ml-[13px]">
        <path d="M2 1l10 10L2 21" />
      </svg>
      <Icon size={24} sw={1.800} className="ml-[38px] text-[#5c5f69]">
        <path d="M21 10V4q0-2-2-2H4Q2 2 2 4v16q0 2 2 2h7M7 7l6 6M13 8v5H8M15.500 15.500h6.500v7h-6.500z" />
      </Icon>
      <Icon size={26} sw={2} className="ml-[14px] text-[#5c5f69]">
        <path d="M0 7h5M13 7h12M0 19h12M20 19h5" />
        <circle cx="9" cy="7" r="3.800" />
        <circle cx="16" cy="19" r="3.800" />
      </Icon>
    </div>

    <div className="mx-[28px] mt-[28px] flex h-[42px] shrink-0 items-center">
      <span className="flex h-[42px] w-[42px] items-center justify-center rounded-[3px] bg-[#22242e]">
        <BookModeIcon bars={[[25, RED], [20, RED], [20, GREEN], [25, GREEN]]} />
      </span>
      <span className="ml-[22px]">
        <BookModeIcon bars={[[20, GREEN], [20, GREEN], [20, GREEN], [25, GREEN]]} />
      </span>
      <span className="ml-[30px]">
        <BookModeIcon bars={[[25, RED], [20, RED], [20, RED], [20, RED]]} />
      </span>
      <span className="ml-auto flex h-[42px] w-[125px] items-center rounded-xl bg-[#22242e] pl-[14px] text-[20px] font-medium text-white">
        <span className="w-[88px]">0.00001</span>
        <Caret className="h-[9px] w-[13px] text-[#8a8e9b]" />
      </span>
    </div>

    <div className="mx-[28px] flex h-[59.3px] shrink-0 items-center pt-[5px] text-[20.8px] whitespace-nowrap text-[#7f8390]">
      <span className="w-[140px]">Price(USDT)</span>
      <span className="w-[209px] text-right">Quantity(USDT)</span>
      <span className="flex-1 text-right">Total(USDT)</span>
    </div>

    <div className="mx-[28px] flex shrink-0 flex-col">
      <BookRows rows={ASKS} max={172.6} ask />
      <div className="flex h-[54px] items-center">
        <span className="w-[189px] text-[34px] leading-none font-semibold text-[#f7f8fa]">0.018775</span>
        <span className="border-b border-dotted border-[#5c5f69] text-[20.9px] leading-[27px] text-[#7f8390]">
          0.018768
        </span>
      </div>
      <BookRows rows={BIDS} max={169.6} />
    </div>

    {/* buy / sell ratio */}
    <div className="mx-[28px] mt-[21px] flex h-[35px] shrink-0 text-[20.5px] font-medium text-[#eff0f3]">
      <div className="flex w-[301px] items-center rounded-l-[3px] bg-[#23332c] pl-[2px] [clip-path:polygon(0_0,296px_0,100%_100%,0_100%)]">
        <span className="flex h-[31px] w-[31px] items-center justify-center rounded-[2px] bg-[#111216]">B</span>
        <span className="ml-[86px]">52.6%</span>
      </div>
      <div className="ml-[2px] flex flex-1 items-center justify-end rounded-r-[3px] bg-[#3d1e26] pr-px [clip-path:polygon(0_0,100%_0,100%_100%,5px_100%)]">
        <span className="mr-[73px]">47.4%</span>
        <span className="flex h-[31px] w-[31px] items-center justify-center rounded-[2px] bg-[#111216]">S</span>
      </div>
    </div>

    {/* watermark */}
    <div className="absolute top-[1316px] left-[321px] flex items-center font-['Noto_Sans',sans-serif] text-[#d0d1d4]">
      <svg width="28" height="28" viewBox="0 0 28 28" fill="currentColor">
        <path d="M14 1l8.500 8.500-3.200 3.200L14 7.400l-5.300 5.300-3.200-3.200zM14 27l8.500-8.500-3.200-3.200-5.300 5.300-5.300-5.300-3.200 3.200zM14 10.800l3.200 3.200-3.200 3.200-3.200-3.200zM3.200 10.800L6.400 14l-3.200 3.200L0 14zM24.800 10.800L28 14l-3.200 3.200-3.200-3.200z" />
      </svg>
      <svg width="272" height="34" className="ml-[4px]">
        <text x="1" y="25" fontSize="23.500" fill="currentColor" textLength="269" lengthAdjust="spacingAndGlyphs">
          @ ScalpingX TG Channel
        </text>
      </svg>
    </div>
  </aside>
);

export default function App() {
  return (
    <div className="flex h-[1450px] w-[3195px] flex-col overflow-hidden bg-black pl-[7px] font-['Inter',sans-serif]">
      <Header />
      <main className="mt-[7px] flex h-[1358px] gap-[7px]">
        <section className="flex w-[2550px] shrink-0 flex-col bg-[#111216]">
          <ChartTabs />
          <AiRow />
          <Toolbar />
          <div className="flex h-[1153px] shrink-0 pl-[13px]">
            <DrawingTools />
            <div className="flex flex-col">
              <Chart />
              <ChartFooter />
            </div>
          </div>
        </section>
        <OrderBook />
      </main>
    </div>
  );
}
